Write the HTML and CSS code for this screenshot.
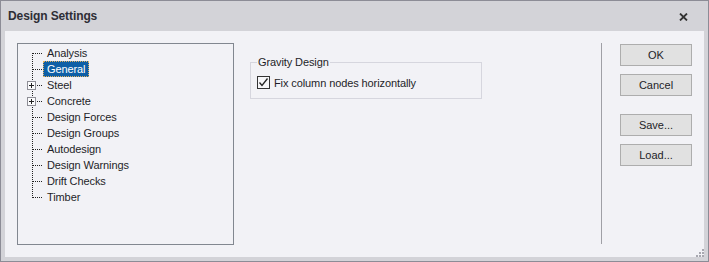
FILE: index.html
```html
<!DOCTYPE html>
<html>
<head>
<meta charset="utf-8">
<link rel="stylesheet" href="styles.css">
</head>
<body>
<div class="window">
  <div class="titlebar">
    <span class="title">Design Settings</span>
    <span class="close"><svg width="9" height="8" viewBox="0 0 9 8"><path d="M1 0.5 L8 7.5 M8 0.5 L1 7.5" stroke="#333" stroke-width="1.8" fill="none"/></svg></span>
  </div>
  <div class="client">
    <div class="tree">
      <ul class="tree-list">
        <li class="node"><span class="label">Analysis</span></li>
        <li class="node selected"><span class="label">General</span></li>
        <li class="node"><svg class="expander" width="9" height="9" viewBox="0 0 9 9"><rect x="0.5" y="0.5" width="8" height="8" fill="#fbfbfd" stroke="#8e8e96"/><path d="M2 4.5 H7 M4.5 2 V7" stroke="#222" stroke-width="1"/></svg><span class="label">Steel</span></li>
        <li class="node"><svg class="expander" width="9" height="9" viewBox="0 0 9 9"><rect x="0.5" y="0.5" width="8" height="8" fill="#fbfbfd" stroke="#8e8e96"/><path d="M2 4.5 H7 M4.5 2 V7" stroke="#222" stroke-width="1"/></svg><span class="label">Concrete</span></li>
        <li class="node"><span class="label">Design Forces</span></li>
        <li class="node"><span class="label">Design Groups</span></li>
        <li class="node"><span class="label">Autodesign</span></li>
        <li class="node"><span class="label">Design Warnings</span></li>
        <li class="node"><span class="label">Drift Checks</span></li>
        <li class="node"><span class="label">Timber</span></li>
      </ul>
    </div>
    <div class="main">
      <fieldset class="group">
        <legend>Gravity Design</legend>
        <label class="check">
          <span class="box"><svg width="11" height="11" viewBox="0 0 11 11"><path d="M1.5 5.5 L4 8.5 L9.5 1.5" stroke="#222" stroke-width="1.3" fill="none"/></svg></span>
          <span>Fix column nodes horizontally</span>
        </label>
      </fieldset>
    </div>
    <div class="separator"></div>
    <div class="buttons">
      <button class="btn">OK</button>
      <button class="btn">Cancel</button>
      <button class="btn spaced">Save...</button>
      <button class="btn">Load...</button>
    </div>
    <div class="grip">
      <i></i><i></i><i></i><i></i><i></i><i></i>
    </div>
  </div>
</div>
</body>
</html>
```
FILE: styles.css
```css
html, body {
  margin: 0;
  padding: 0;
}
body {
  font-family: "Liberation Sans", Arial, sans-serif;
  font-size: 11px;
  letter-spacing: -0.1px;
  color: #1e1e28;
  background: #f2f2f6;
}
.window {
  width: 709px;
  height: 262px;
  box-sizing: border-box;
  border: 1px solid #8c8c96;
  background: #d3d3d8;
  display: flex;
  flex-direction: column;
}
.titlebar {
  height: 30px;
  flex: none;
  display: flex;
  align-items: center;
  padding-left: 7px;
}
.title {
  flex: 1;
  font-size: 12px;
  font-weight: bold;
  color: #2e2e36;
}
.close {
  display: flex;
  margin-right: 20px;
  margin-top: 1px;
}
.client {
  flex: 1;
  margin: 0 4px 4px;
  background: #f2f2f6;
  display: flex;
  padding: 12px;
  position: relative;
}
.tree {
  width: 217px;
  flex: none;
  box-sizing: border-box;
  border: 1px solid #828790;
}
.tree-list {
  list-style: none;
  margin: 0;
  padding: 1px 0 0;
  position: relative;
}
.tree-list::before {
  content: "";
  position: absolute;
  left: 14px;
  top: 9px;
  height: 145px;
  border-left: 1px dotted #222;
}
.node {
  position: relative;
  height: 16px;
  padding-left: 25px;
  display: flex;
  align-items: center;
}
.node::before {
  content: "";
  position: absolute;
  left: 15px;
  top: 8px;
  width: 9px;
  border-top: 1px dotted #222;
}
.expander {
  position: absolute;
  left: 9px;
  top: 4px;
  z-index: 1;
}
.label {
  line-height: 14px;
  padding: 0 3px;
  border: 1px solid transparent;
  white-space: nowrap;
}
.selected .label {
  background: #0e5fa6;
  color: #fff;
  border: 1px dotted #e0b060;
}
.main {
  flex: 1;
  padding-left: 16px;
}
.group {
  width: 232px;
  box-sizing: border-box;
  margin: 12px 0 0;
  padding: 7px 6px 9px;
  border: 1px solid #d6d6de;
  min-width: 0;
}
.group legend {
  padding: 0 1px;
  line-height: 14px;
  color: #1e1e28;
}
.check {
  display: flex;
  align-items: center;
  gap: 4px;
  height: 13px;
}
.box {
  width: 13px;
  height: 13px;
  box-sizing: border-box;
  border: 1px solid #333;
  background: #f6f6f8;
  display: flex;
}
.separator {
  width: 1px;
  height: 201px;
  background: #a0a0a6;
  flex: none;
}
.buttons {
  margin-left: 18px;
  width: 72px;
  flex: none;
  display: flex;
  flex-direction: column;
  padding-top: 1px;
}
.btn {
  height: 22px;
  box-sizing: border-box;
  border: 1px solid #adadad;
  background: #e1e1e1;
  font: inherit;
  color: #1e1e28;
  padding: 0;
  margin: 0;
}
.btn + .btn {
  margin-top: 8px;
}
.btn.spaced {
  margin-top: 18px;
}
.grip {
  position: absolute;
  right: 0;
  bottom: 0;
  width: 8px;
  height: 8px;
  display: grid;
  grid-template-columns: repeat(3, 2px);
  grid-template-rows: repeat(3, 2px);
  gap: 1px;
}
.grip i {
  background: #a8a8b0;
}
.grip i:nth-child(1) { grid-column: 3; grid-row: 1; }
.grip i:nth-child(2) { grid-column: 2; grid-row: 2; }
.grip i:nth-child(3) { grid-column: 3; grid-row: 2; }
.grip i:nth-child(4) { grid-column: 1; grid-row: 3; }
.grip i:nth-child(5) { grid-column: 2; grid-row: 3; }
.grip i:nth-child(6) { grid-column: 3; grid-row: 3; }
```
